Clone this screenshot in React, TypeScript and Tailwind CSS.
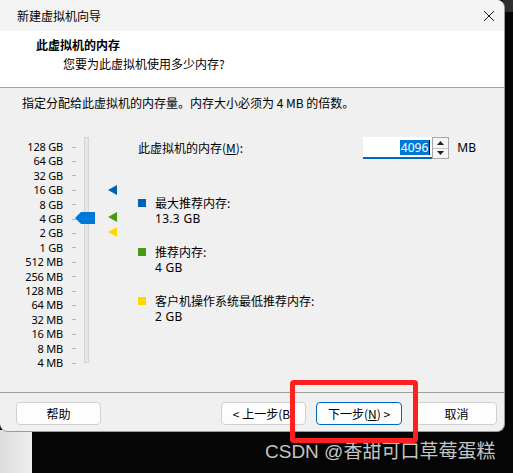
import React from "react";

const cjk = { fontFamily: '"Noto Sans CJK SC", "Noto Sans", sans-serif' };
const latin = { fontFamily: '"Noto Sans", "Noto Sans CJK SC", sans-serif' };

const sizes = [
  "128 GB",
  "64 GB",
  "32 GB",
  "16 GB",
  "8 GB",
  "4 GB",
  "2 GB",
  "1 GB",
  "512 MB",
  "256 MB",
  "128 MB",
  "64 MB",
  "32 MB",
  "16 MB",
  "8 MB",
  "4 MB",
];

function Triangle({ color }: { color: string }) {
  return (
    <svg width="9" height="10" viewBox="0 0 9 10">
      <polygon points="0,5 9,0 9,10" fill={color} />
    </svg>
  );
}

function MemorySlider() {
  return (
    <div className="relative flex w-[120px] pt-[1px]">
      <div className="flex w-[63px] flex-col items-end text-[11px] leading-[14.4px] text-black" style={latin}>
        {sizes.map((s) => (
          <span key={s} className="tracking-[-0.2px]">
            {s}
          </span>
        ))}
      </div>
      <div className="ml-[9px] flex flex-col">
        {sizes.map((s) => (
          <div key={s} className="flex h-[14.4px] items-center">
            <div className="h-[1px] w-[4px] bg-[#b4b4b4]" />
          </div>
        ))}
      </div>
      <div className="ml-[8px] mt-[-3px] h-[226px] w-[5px] border border-[#d6d6d6] bg-[#e6e6e6]" />

      {/* thumb at 4 GB */}
      <svg className="absolute left-[75px] top-[73px]" width="20" height="12" viewBox="0 0 20 12">
        <polygon points="0,6 6,0 20,0 20,12 6,12" fill="#0078d7" />
      </svg>
      <div className="absolute left-[108px] top-[46px]">
        <Triangle color="#0063b1" />
      </div>
      <div className="absolute left-[108px] top-[73px]">
        <Triangle color="#4a9a1a" />
      </div>
      <div className="absolute left-[108px] top-[88px]">
        <Triangle color="#ffd800" />
      </div>
    </div>
  );
}

function Legend({ color, label, value }: { color: string; label: string; value: string }) {
  return (
    <div className="flex">
      <div className={`mt-[4px] h-[8px] w-[8px] ${color}`} />
      <div className="ml-[9px] flex flex-col text-[12px] leading-[16px]">
        <span style={cjk}>{label}</span>
        <span style={latin} className="tracking-[0.3px]">
          {value}
        </span>
      </div>
    </div>
  );
}

function Btn({ children, primary }: { children: React.ReactNode; primary?: boolean }) {
  return (
    <button
      className={`flex h-[23px] w-full items-center justify-center rounded-[4px] border bg-[#fdfdfd] text-[12px] text-black ${
        primary ? "border-[#0067c0]" : "border-[#d0d0d0]"
      }`}
      style={cjk}
    >
      {children}
    </button>
  );
}

export default function App() {
  return (
    <div className="relative h-[473px] w-[513px] overflow-hidden bg-[#050505]" style={cjk}>
      <div className="absolute left-0 top-[430px] h-[43px] w-[32px] bg-gradient-to-r from-[#dcdcdc] to-[#efefef]" />
      <div className="absolute right-0 top-0 h-[12px] w-[10px] bg-[#2e2e2e]" />

      {/* dialog */}
      <div className="relative flex h-[432px] w-[505px] flex-col overflow-hidden rounded-b-[8px] rounded-tr-[8px] border-r border-b border-[#9a9a9a] bg-[#f0f0f0]">
        <div className="flex h-[31px] shrink-0 items-center justify-between bg-[#f3f3f3] pl-[17px] pr-[9px]">
          <span className="text-[12px] text-black">新建虚拟机向导</span>
          <svg width="12" height="12" viewBox="0 0 12 12">
            <path d="M1 1 L11 11 M11 1 L1 11" stroke="#1a1a1a" strokeWidth="1" />
          </svg>
        </div>
        <div className="flex h-[57px] shrink-0 flex-col border-b border-[#a0a0a0] bg-white pl-[36px] pt-[5px]">
          <span className="text-[12px] font-bold leading-[18px] text-black">此虚拟机的内存</span>
          <span className="ml-[27px] mt-[1px] text-[12px] leading-[18px] text-black">您要为此虚拟机使用多少内存?</span>
        </div>

        <div className="flex flex-1 flex-col">
          <div className="pl-[22px] pt-[6px] text-[12px] leading-[18px] text-black">
            指定分配给此虚拟机的内存量。内存大小必须为 4 MB 的倍数。
          </div>

          <div className="mt-[27px] flex">
            <MemorySlider />
            <div className="ml-[18px] flex flex-1 flex-col pr-[28px]">
              <div className="mt-[-2px] flex items-center">
                <span className="text-[12px] text-black">
                  此虚拟机的内存(<span className="underline">M</span>):
                </span>
                <div className="ml-auto flex items-center">
                  <div className="flex h-[22px] w-[69px] items-center justify-end border-b-2 border-[#0067c0] bg-white pr-[2px]">
                    <span className="bg-[#0078d7] px-[1px] text-[12px] leading-[15px] text-white" style={latin}>
                      4096
                    </span>
                    <div className="h-[15px] w-[1px] bg-black" />
                  </div>
                  <div className="flex h-[22px] w-[17px] flex-col border border-[#a8a8a8] bg-[#f5f5f5]">
                    <div className="flex flex-1 items-center justify-center border-b border-[#c8c8c8]">
                      <svg width="7" height="4" viewBox="0 0 7 4">
                        <polygon points="0,4 3.5,0 7,4" fill="#222" />
                      </svg>
                    </div>
                    <div className="flex flex-1 items-center justify-center">
                      <svg width="7" height="4" viewBox="0 0 7 4">
                        <polygon points="0,0 7,0 3.5,4" fill="#222" />
                      </svg>
                    </div>
                  </div>
                  <span className="ml-[8px] text-[12px] text-black" style={latin}>
                    MB
                  </span>
                </div>
              </div>

              <div className="mt-[36px] flex flex-col gap-[17px]">
                <Legend color="bg-[#0063b1]" label="最大推荐内存:" value="13.3 GB" />
                <Legend color="bg-[#4a9a1a]" label="推荐内存:" value="4 GB" />
                <Legend color="bg-[#ffd800]" label="客户机操作系统最低推荐内存:" value="2 GB" />
              </div>
            </div>
          </div>
        </div>

        <div className="flex h-[39px] shrink-0 items-start border-t border-[#a0a0a0] pl-[16px] pt-[9px]">
          <div className="w-[85px]">
            <Btn>帮助</Btn>
          </div>
          <div className="ml-[120px] w-[85px]">
            <Btn>&lt; 上一步(B)</Btn>
          </div>
          <div className="ml-[10px] w-[86px]">
            <Btn primary>
              下一步(<span className="underline">N</span>) &gt;
            </Btn>
          </div>
          <div className="ml-[14px] w-[81px]">
            <Btn>取消</Btn>
          </div>
        </div>
      </div>

      {/* watermark */}
      <div className="absolute left-[265px] top-[439px] text-[19px] leading-[26px] text-[#c4c4c4]" style={{ fontFamily: '"Liberation Sans", "Noto Sans CJK SC", sans-serif' }}>
        CSDN @香甜可口草莓蛋糕
      </div>

      {/* red annotation */}
      <div className="absolute left-[290px] top-[380px] h-[63px] w-[128px] rounded-[4px] border-[5px] border-[#ff1f1f]" />
    </div>
  );
}
